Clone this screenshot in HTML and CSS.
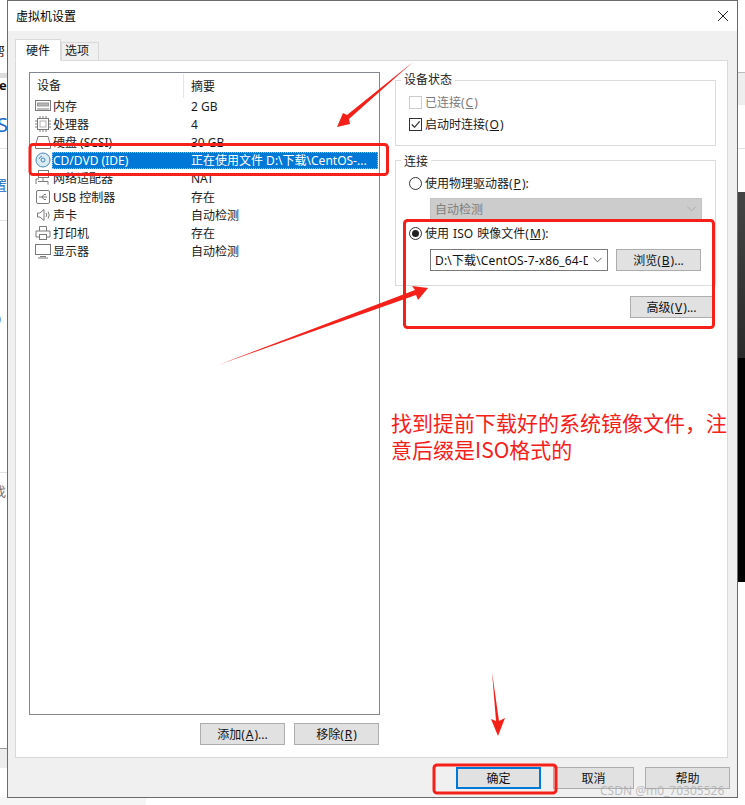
FILE: index.html
```html
<!DOCTYPE html>
<html lang="zh-CN">
<head>
<meta charset="utf-8">
<title>虚拟机设置</title>
<link rel="stylesheet" href="styles.css">
</head>
<body>
<div class="desktop">
  <div class="bg-left">
    <div class="bg-bar"></div>
    <div class="bg-line l1"></div>
    <div class="bg-line l2"></div>
    <div class="bg-line l3"></div>
    <span class="frag f1">帮</span>
    <span class="frag f2">e</span>
    <span class="frag f3">S</span>
    <span class="frag f4">置</span>
    <span class="frag f5">)</span>
    <span class="frag f6">找</span>
    <div class="bg-low"></div>
  </div>
  <div class="bg-bottom"></div>
  <div class="bg-right">
    <div class="bg-rbar"></div>
    <div class="bg-rline"></div>
    <div class="bg-dark"></div>
    <div class="bg-black"></div>
  </div>

  <div class="window">
    <div class="titlebar">
      <span class="title">虚拟机设置</span>
      <svg class="close" viewBox="0 0 10 10"><path d="M0 0 L10 10 M10 0 L0 10"/></svg>
    </div>
    <div class="tabs">
      <div class="tab active">硬件</div>
      <div class="tab">选项</div>
    </div>
    <div class="page">
      <div class="left">
        <div class="list">
          <div class="row head"><span class="col1">设备</span><span class="col2">摘要</span></div>
          <div class="row">
            <svg class="ico" viewBox="0 0 16 16"><rect x="0.5" y="2.5" width="15" height="10"/><rect x="2.5" y="5" width="11" height="3" class="fill"/><path d="M2 11h12"/></svg>
            <span class="col1">内存</span><span class="col2">2 GB</span>
          </div>
          <div class="row">
            <svg class="ico" viewBox="0 0 16 16"><rect x="2.5" y="2.5" width="11" height="11"/><path d="M5 0v2M8 0v2M11 0v2M5 14v2M8 14v2M11 14v2M0 5h2M0 8h2M0 11h2M14 5h2M14 8h2M14 11h2"/><rect x="5" y="5" width="6" height="6" class="thin"/></svg>
            <span class="col1">处理器</span><span class="col2">4</span>
          </div>
          <div class="row">
            <svg class="ico" viewBox="0 0 16 16"><path d="M3 2.5h10l2.5 9v3h-15v-3z"/><path d="M0.5 11.5h15"/></svg>
            <span class="col1">硬盘 (SCSI)</span><span class="col2">30 GB</span>
          </div>
          <div class="row selected">
            <svg class="ico cd" viewBox="0 0 16 16"><circle cx="8" cy="8" r="7"/><circle cx="8" cy="8" r="2"/><path d="M4 7a4.500 4.500 0 0 1 3-3"/></svg>
            <span class="sel"><span class="col1">CD/DVD (IDE)</span><span class="col2">正在使用文件 D:\下载\CentOS-...</span></span>
          </div>
          <div class="row">
            <svg class="ico" viewBox="0 0 16 16"><rect x="3.500" y="0.500" width="10" height="7"/><path d="M8 8v3M3 11.500h10M1 9h3M1 9v5M13 11.500v3"/></svg>
            <span class="col1">网络适配器</span><span class="col2">NAT</span>
          </div>
          <div class="row">
            <svg class="ico" viewBox="0 0 16 16"><rect x="1.500" y="1.500" width="13" height="13" rx="1.500"/><path d="M4 8h8M7 8l2-2.500h2M7 8l2 2.500h2"/></svg>
            <span class="col1">USB 控制器</span><span class="col2">存在</span>
          </div>
          <div class="row">
            <svg class="ico" viewBox="0 0 16 16"><path d="M2.500 6v4h2.500l4 3.500v-11l-4 3.500z"/><path d="M11 6q1.500 2 0 4M13 4.500q2.500 3.500 0 7"/></svg>
            <span class="col1">声卡</span><span class="col2">自动检测</span>
          </div>
          <div class="row">
            <svg class="ico" viewBox="0 0 16 16"><path d="M4.500 6v-4.500h7v4.500M4.500 12h-3.500v-6h14v6h-3.500"/><rect x="4.500" y="9.500" width="7" height="5"/></svg>
            <span class="col1">打印机</span><span class="col2">存在</span>
          </div>
          <div class="row">
            <svg class="ico" viewBox="0 0 16 16"><rect x="0.500" y="1.500" width="15" height="10"/><path d="M5 13.500h6M3 15h10"/></svg>
            <span class="col1">显示器</span><span class="col2">自动检测</span>
          </div>
        </div>
        <div class="list-btns">
          <div class="btn">添加(<u>A</u>)...</div>
          <div class="btn">移除(<u>R</u>)</div>
        </div>
      </div>
      <div class="right">
        <div class="group status">
          <span class="legend">设备状态</span>
          <div class="opt disabled"><span class="box"></span>已连接(<u>C</u>)</div>
          <div class="opt second"><span class="box checked"><svg viewBox="0 0 12 12"><path d="M2 6 L5 9 L10.500 2.500"/></svg></span>启动时连接(<u>O</u>)</div>
        </div>
        <div class="group conn">
          <span class="legend">连接</span>
          <div class="opt"><span class="radio"></span>使用物理驱动器(<u>P</u>):</div>
          <div class="select off"><span>自动检测</span><svg class="chev" viewBox="0 0 10 6"><path d="M0.500 0.500 L5 5 L9.500 0.500"/></svg></div>
          <div class="opt iso"><span class="radio on"></span>使用 ISO 映像文件(<u>M</u>):</div>
          <div class="iso-row">
            <div class="select file"><span class="file-name">D:\下载\CentOS-7-x86_64-D</span><svg class="chev" viewBox="0 0 10 6"><path d="M0.500 0.500 L5 5 L9.500 0.500"/></svg></div>
            <div class="btn">浏览(<u>B</u>)...</div>
          </div>
        </div>
        <div class="adv-row"><div class="btn adv">高级(<u>V</u>)...</div></div>
      </div>
    </div>
    <div class="footer">
      <div class="btn default">确定</div>
      <div class="btn">取消</div>
      <div class="btn">帮助</div>
    </div>
  </div>

  <svg class="marks" viewBox="0 0 745 805">
    <rect x="30" y="144.500" width="357.500" height="30" rx="3" class="mark"/>
    <rect x="404.500" y="220.500" width="309" height="107" rx="3" class="mark"/>
    <rect x="434" y="765" width="122" height="28" rx="3" class="mark"/>
    <polygon points="413,62 349,119 350,124 337,127 343,113 347,115" class="fillred"/>
    <polygon points="218,365 415,290 412,286 428,288 418,300 416,295" class="fillred"/>
    <polygon points="492,672 496,721 491,719 498,736 505,718 499,721" class="fillred"/>
  </svg>
  <div class="note">找到提前下载好的系统镜像文件，注<br>意后缀是ISO格式的</div>
  <div class="watermark">CSDN @m0_70305526</div>
</div>
</body>
</html>
```
FILE: styles.css
```css
* { box-sizing: border-box; }
html, body { margin: 0; padding: 0; }
body {
  width: 745px;
  height: 805px;
  overflow: hidden;
  background: #fff;
  font-family: "Noto Sans", "Noto Sans CJK SC", sans-serif;
  font-size: 12px;
  color: #1a1a1a;
}
.desktop { position: relative; width: 745px; height: 805px; overflow: hidden; }

.bg-left { position: absolute; left: 0; top: 0; width: 8px; height: 805px; overflow: hidden; }
.bg-bar { position: absolute; left: 0; top: 73px; width: 8px; height: 5px; background: #dcdcdc; }
.bg-line { position: absolute; left: 0; width: 8px; height: 1px; background: #e2e2e2; }
.l1 { top: 148px; }
.l2 { top: 220px; }
.l3 { top: 472px; }
.bg-low { position: absolute; left: 0; top: 748px; width: 8px; height: 20px; background: #ececec; border-top: 1px solid #999; }
.frag { position: absolute; left: -6px; font-size: 13px; line-height: 16px; color: #111; }
.f1 { top: 43px; left: -8px; }
.f2 { top: 77px; left: -1px; font-weight: 700; }
.f3 { top: 113px; left: -3px; font-size: 20px; line-height: 24px; color: #1768c8; }
.f4 { top: 177px; left: -6px; color: #1768c8; }
.f5 { top: 310px; left: -3px; color: #4a2020; }
.f6 { top: 483px; left: -7px; color: #777; }
.bg-bottom { position: absolute; left: 0; top: 797px; width: 146px; height: 8px; background: #f5f5f5; }

.bg-right { position: absolute; left: 738px; top: 0; width: 7px; height: 805px; }
.bg-rbar { position: absolute; left: 0; top: 72px; width: 7px; height: 33px; background: #eeeeee; border-top: 1px solid #bbb; }
.bg-rline { position: absolute; left: 0; top: 148px; width: 7px; height: 1px; background: #e2e2e2; }
.bg-dark { position: absolute; left: 0; top: 192px; width: 7px; height: 166px; background: linear-gradient(#444, #2a2a2a); }
.bg-black { position: absolute; left: 0; top: 358px; width: 7px; height: 224px; background: #000; }

.window {
  position: absolute;
  left: 7px;
  top: 0;
  width: 731px;
  height: 798px;
  display: flex;
  flex-direction: column;
  background: #f0f0f0;
  border: 1px solid #6b6b6b;
}
.titlebar {
  flex: none;
  height: 30px;
  background: #fff;
  display: flex;
  align-items: center;
  justify-content: space-between;
  padding: 0 9px 0 8px;
}
.title { color: #000; }
.close { width: 10px; height: 10px; fill: none; stroke: #222; stroke-width: 1; }

.tabs { flex: none; height: 29px; display: flex; align-items: flex-end; padding-left: 7px; }
.tab {
  width: 38px;
  height: 19px;
  margin-bottom: -1px;
  padding: 0 6px 3px 0;
  border: 1px solid #d9d9d9;
  background: #f0f0f0;
  display: flex;
  align-items: center;
  justify-content: center;
}
.tab.active {
  width: 46px;
  height: 22px;
  padding: 0;
  background: #fff;
  border-bottom-color: #fff;
  position: relative;
  z-index: 1;
}

.page {
  flex: none;
  height: 698px;
  margin: 0 9px 0 7px;
  width: 713px;
  background: #fff;
  border: 1px solid #d9d9d9;
  display: flex;
  padding: 11px 0 0 13px;
}
.left { flex: none; width: 351px; }
.list {
  height: 643px;
  border: 1px solid #828790;
  padding-top: 1px;
}
.row {
  height: 18.100px;
  display: flex;
  align-items: center;
  padding-left: 5px;
  white-space: nowrap;
}
.row .col1 { flex: none; width: 138px; }
.row .col2 { flex: none; }
.head { height: 24px; margin-bottom: -1px; padding-left: 7px; }
.head .col1 { width: 147px; height: 24px; line-height: 24px; border-right: 1px solid #e5e5e5; }
.head .col2 { padding: 0 0 0 7px; }
.ico {
  flex: none;
  width: 16px;
  height: 16px;
  margin-right: 2px;
  fill: none;
  stroke: #7a7a7a;
  stroke-width: 1;
}
.ico .fill { fill: #b5b5b5; stroke: #999; }
.ico .thin { stroke: #b0b0b0; }
.ico.cd { stroke: #4a86b8; fill: #dcecf7; }
.sel {
  display: flex;
  align-items: center;
  height: 16.500px;
  width: 326px;
  margin-left: -1px;
  padding-left: 1px;
  background: #0078d7;
  color: #fff;
  outline: 1px dotted #8fc4ee;
  outline-offset: -1px;
}
.sel .col1 { width: 138px; }

.list-btns { display: flex; justify-content: flex-end; gap: 9px; margin-top: 8px; padding-right: 1px; }
.btn {
  flex: none;
  width: 85px;
  height: 22px;
  background: #e1e1e1;
  border: 1px solid #adadad;
  display: flex;
  align-items: center;
  justify-content: center;
  white-space: pre;
  color: #111;
}
.btn u, .opt u { text-underline-offset: 1px; margin: 0 1px; }

.right { flex: none; width: 321px; margin-left: 15px; padding-top: 8px; }
.group {
  border: 1px solid #dcdcdc;
  padding: 0 0 0 13px;
}
.legend {
  display: block;
  width: max-content;
  margin: -10px 0 0 -8px;
  padding: 0 3px 0 3px;
  height: 17px;
  line-height: 17px;
  background: #fff;
  color: #222;
}
.status { height: 66px; }
.conn { height: 126px; margin-top: 14px; padding-left: 13px; }
.conn .legend { margin-top: -8px; }
.opt {
  display: flex;
  align-items: center;
  height: 16px;
  white-space: pre;
}
.opt.iso { word-spacing: 1px; }
.status .opt { margin-top: 6px; }
.conn .opt { margin-top: 5px; }
.disabled { color: #7a7a7a; }
.box {
  flex: none;
  width: 13px;
  height: 13px;
  margin-right: 3px;
  border: 1px solid #333;
  background: #fff;
  display: flex;
}
.disabled .box { border-color: #ccc; }
.box svg { width: 11px; height: 11px; fill: none; stroke: #222; stroke-width: 1.200; }
.radio {
  flex: none;
  width: 13px;
  height: 13px;
  margin-right: 3px;
  border: 1px solid #333;
  border-radius: 50%;
  background: #fff;
  display: flex;
  align-items: center;
  justify-content: center;
}
.radio.on::after {
  content: "";
  width: 7px;
  height: 7px;
  border-radius: 50%;
  background: #222;
}
.select {
  display: flex;
  align-items: center;
  justify-content: space-between;
  height: 22px;
  white-space: nowrap;
}
.select.off {
  width: 272px;
  margin: 7px 0 0 21px;
  padding: 0 5px 0 4px;
  background: #cccccc;
  border: 1px solid #c4c4c4;
  color: #7f7f7f;
}
.iso-row { display: flex; align-items: flex-start; gap: 8px; margin: 8px 0 0 21px; }
.select.file {
  width: 178px;
  padding: 0 5px 0 4px;
  background: #fff;
  border: 1px solid #7a7a7a;
  overflow: hidden;
}
.file-name { display: block; width: 153px; overflow: hidden; color: #111; letter-spacing: 0.15px; }
.chev { flex: none; width: 9px; height: 6px; fill: none; stroke: #555; stroke-width: 1; }
.off .chev { stroke: #a8a8a8; }
.adv-row { display: flex; justify-content: flex-end; margin-top: 10px; padding-right: 3px; }
.adv { width: 83px; }

.footer { flex: 1; display: flex; align-items: flex-start; padding: 9px 0 0 448px; }
.footer .btn { margin-right: 12px; }
.footer .btn:nth-child(2) { width: 81px; margin-right: 11px; }
.default { border: 2px solid #0078d7; }

.marks { position: absolute; left: 0; top: 0; width: 745px; height: 805px; pointer-events: none; }
.mark { fill: none; stroke: #f5201a; stroke-width: 3; }
.fillred { fill: #f5201a; }
.note {
  position: absolute;
  left: 391px;
  top: 409px;
  font-family: "Noto Sans CJK SC", sans-serif;
  font-size: 21px;
  line-height: 27px;
  color: #f5201a;
  white-space: nowrap;
}
.watermark {
  position: absolute;
  left: 600px;
  top: 783px;
  font-size: 12px;
  line-height: 16px;
  color: rgba(165,165,165,0.7);
  white-space: nowrap;
}
```
